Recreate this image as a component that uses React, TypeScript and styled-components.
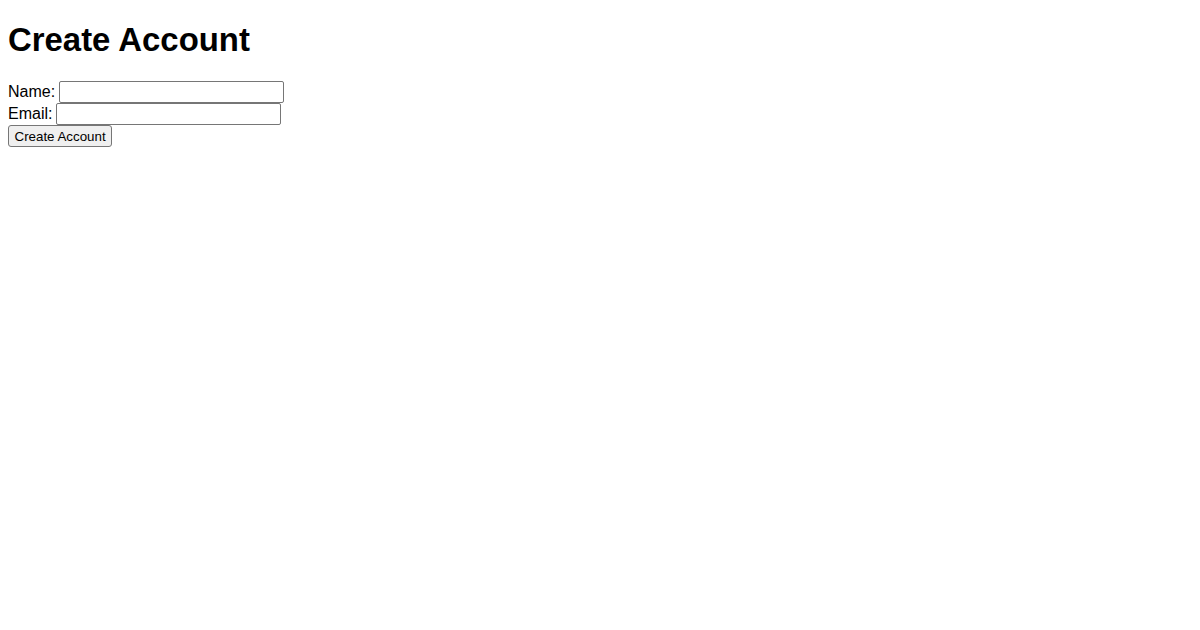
import React from "react";
import styled, { createGlobalStyle } from "styled-components";

const Global = createGlobalStyle`
  html, body {
    margin: 0;
    padding: 0;
    background: #ffffff;
  }
  body {
    font-family: "Liberation Sans", Arial, sans-serif;
    color: #000000;
  }
`;

const Page = styled.main`
  display: flow-root;
  padding: 0 8px 8px;
`;

const Heading = styled.h1`
  font-family: "Liberation Sans", Arial, sans-serif;
  font-size: 32.9px;
  line-height: 37px;
  font-weight: bold;
  margin: 21px 0 23px;
`;

const Form = styled.form`
  display: flex;
  flex-direction: column;
  align-items: flex-start;
`;

const Field = styled.label`
  display: flex;
  align-items: center;
  gap: 3.5px;
  height: 22px;
  font-size: 16px;
  line-height: 18px;
`;

const Input = styled.input`
  box-sizing: border-box;
  width: 225px;
  height: 22px;
  margin: 0;
  padding: 1px 2px;
  border: 1px solid #767676;
  border-radius: 2px;
  background: #ffffff;
  font-family: "Liberation Sans", Arial, sans-serif;
  font-size: 13.333px;
`;

const Button = styled.button`
  box-sizing: border-box;
  height: 22px;
  margin: 0;
  padding: 0 5.5px;
  border: 1px solid #767676;
  border-radius: 3px;
  background: #efefef;
  color: #000000;
  font-family: "Liberation Sans", Arial, sans-serif;
  font-size: 13.333px;
  line-height: 15px;
`;

export default function App() {
  return (
    <>
      <Global />
      <Page>
        <Heading>Create Account</Heading>
        <Form onSubmit={(e) => e.preventDefault()}>
          <Field>
            Name:
            <Input type="text" />
          </Field>
          <Field>
            Email:
            <Input type="email" />
          </Field>
          <Button type="submit">Create Account</Button>
        </Form>
      </Page>
    </>
  );
}
